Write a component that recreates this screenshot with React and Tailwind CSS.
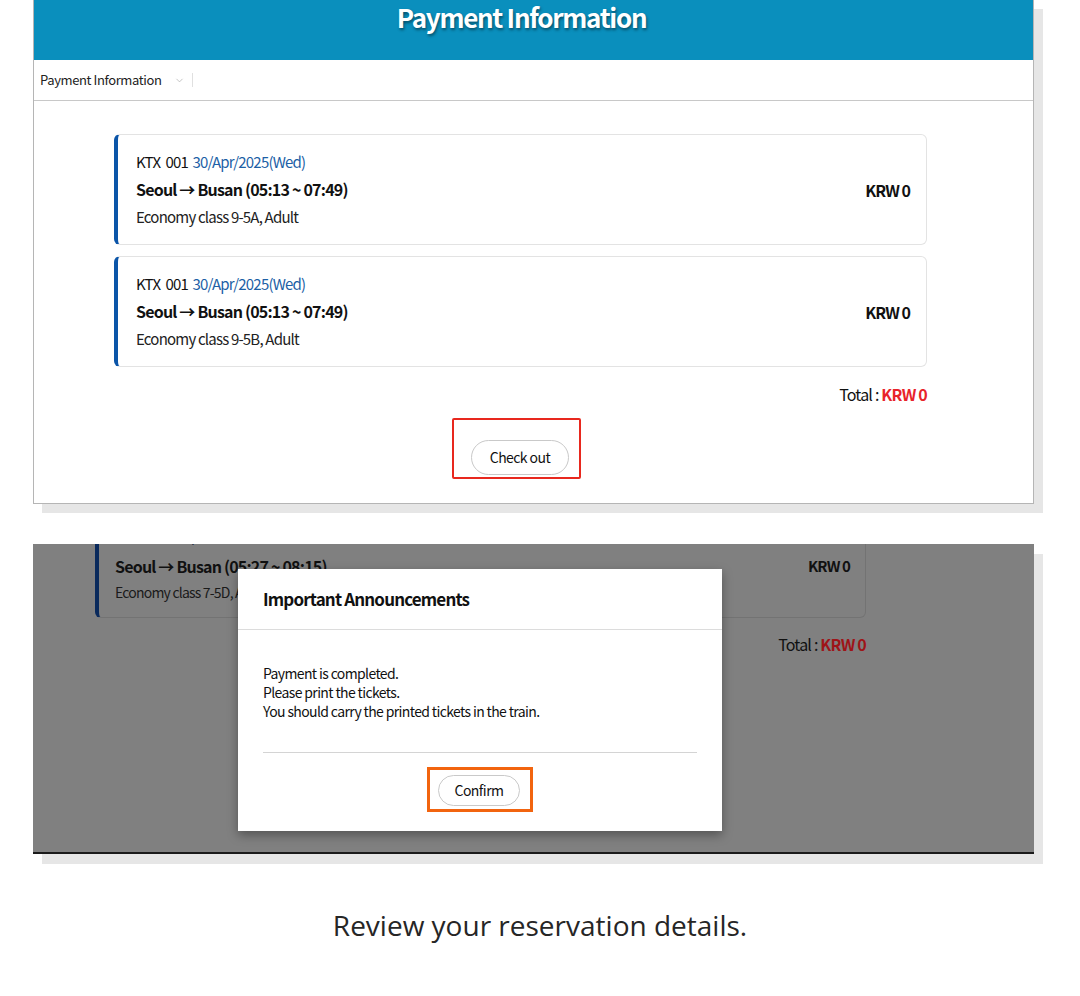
import { ChevronDown } from 'lucide-react';

const ko = { fontFamily: '"Noto Sans CJK KR", "Noto Sans", sans-serif' };

const trips = [
  { seat: 'Economy class 9-5A, Adult' },
  { seat: 'Economy class 9-5B, Adult' },
];

function TripCard({ seat }) {
  return (
    <div className="flex items-center justify-between h-[111px] rounded-md border border-[#e3e3e3] border-l-4 border-l-[#0b55a8] pl-[18px] pr-[16px]">
      <div className="flex flex-col tracking-[-0.05em]">
        <div className="text-[15px] leading-[20px] text-[#111]">
          KTX&nbsp; 001 <span className="text-[#1d5fa6] ml-[2px]">30/Apr/2025(Wed)</span>
        </div>
        <div className="text-[16px] font-bold leading-[24px] mt-[5px] text-[#111]">Seoul → Busan (05:13 ~ 07:49)</div>
        <div className="text-[15px] leading-[20px] mt-[6px] text-[#222]">{seat}</div>
      </div>
      <div className="text-[16px] font-bold tracking-[-0.06em] text-[#111]">KRW 0</div>
    </div>
  );
}

export default function App() {
  return (
    <div className="w-[1080px] h-[996px] bg-white overflow-hidden" style={ko}>
      {/* top screen: payment info */}
      <div className="ml-[33px] w-[1001px] h-[504px] bg-white border-x border-b border-[#b5b5b5] shadow-[9px_9px_0_#e6e6e6] flex flex-col">
        <div className="h-[60px] bg-[#0a8fbd] flex justify-center pt-[1px] pr-[24px]">
          <h1 className="text-[26px] font-bold text-white leading-[32px] tracking-[-0.05em] [text-shadow:1px_2px_3px_rgba(0,0,0,0.45)]">
            Payment Information
          </h1>
        </div>
        <div className="h-[41px] border-b border-[#c8c8c8] flex items-center pl-[6px]">
          <span className="text-[13px] text-[#222] tracking-[-0.03em]">Payment Information</span>
          <ChevronDown size={11} strokeWidth={1.5} className="text-[#aaa] ml-[13px]" />
          <span className="w-px h-[14px] bg-[#e0e0e0] ml-[7px]" />
        </div>
        <div className="ml-[80px] mr-[106px] mt-[33px] flex flex-col">
          <div className="flex flex-col gap-[11px]">
            {trips.map((t) => (
              <TripCard key={t.seat} seat={t.seat} />
            ))}
          </div>
          <div className="flex justify-end mt-[16px] text-[16px] tracking-[-0.05em] leading-[22px]">
            <span className="text-[#111]">Total :&nbsp;</span>
            <span className="font-bold text-[#e8232a]">KRW 0</span>
          </div>
          <div className="flex justify-center mt-[13px]">
            <div className="border-2 border-[#e8281e] rounded-[2px] pl-[17px] pr-[10px] pt-[20px] pb-[2px] -ml-[8px]">
              <button className="w-[98px] h-[35px] rounded-full border border-[#c9c9c9] bg-white text-[14px] text-[#111] tracking-[-0.04em]">
                Check out
              </button>
            </div>
          </div>
        </div>
      </div>

      {/* bottom screen: announcement dialog */}
      <div className="relative ml-[33px] mt-[40px] w-[1001px] h-[310px] bg-[#808080] border-b-2 border-[#1a1a1a] shadow-[9px_10px_0_#e6e6e6] overflow-hidden">
        <div className="ml-[62px] w-[771px] -mt-[38px] h-[112px] rounded-md border border-[#737373] border-l-4 border-l-[#0a2a5c] flex flex-col pl-[16px] pr-[15px] pt-[18px] tracking-[-0.05em]">
          <div className="text-[14px] leading-[20px] text-[#1a2a40]">KTX&nbsp; 001 30/Apr/2025(Wed)</div>
          <div className="flex items-center justify-between mt-[10px] leading-[22px]">
            <span className="text-[16px] font-bold text-[#111]">Seoul → Busan (05:27 ~ 08:15)</span>
            <span className="text-[15px] font-bold tracking-[-0.06em] text-[#111]">KRW 0</span>
          </div>
          <div className="text-[14px] leading-[20px] mt-[5px] text-[#1a1a1a]">Economy class 7-5D, Adult</div>
        </div>
        <div className="w-[833px] flex justify-end mt-[15px] text-[16px] tracking-[-0.05em] leading-[22px]">
          <span className="text-[#111]">Total :&nbsp;</span>
          <span className="font-bold text-[#9e1418]">KRW 0</span>
        </div>

        <div className="absolute left-[205px] top-[25px] w-[484px] h-[262px] bg-white shadow-[0_4px_10px_rgba(0,0,0,0.35)] flex flex-col">
          <div className="h-[61px] border-b border-[#dcdcdc] flex items-center pl-[25px]">
            <h2 className="text-[17px] font-bold text-[#111] tracking-[-0.05em]">Important Announcements</h2>
          </div>
          <div className="px-[25px] pt-[34px] text-[14px] leading-[19px] text-[#111] tracking-[-0.045em]">
            <p>Payment is completed.</p>
            <p>Please print the tickets.</p>
            <p>You should carry the printed tickets in the train.</p>
          </div>
          <div className="mx-[25px] mt-[31px] border-t border-[#d4d4d4]" />
          <div className="flex justify-center mt-[14px]">
            <div className="border-[3px] border-[#f2640f] pl-[8px] pr-[10px] pt-[5px] pb-[3px]">
              <button className="w-[82px] h-[31px] rounded-full border border-[#c9c9c9] bg-white text-[14px] text-[#111] tracking-[-0.04em]">
                Confirm
              </button>
            </div>
          </div>
        </div>
      </div>

      <p className="mt-[51px] text-center text-[28px] leading-[40px] text-[#262626] font-normal" style={{ fontFamily: '"Open Sans", Lato, sans-serif' }}>
        Review your reservation details.
      </p>
    </div>
  );
}
